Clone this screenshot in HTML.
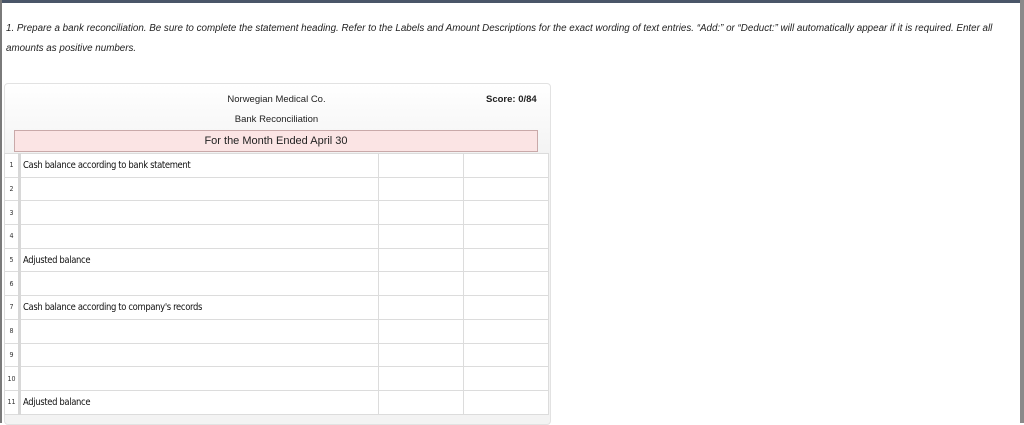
<!DOCTYPE html>
<html><head><style>
body{margin:0;width:1024px;height:423px;overflow:hidden;background:#fff;position:relative;font-family:"Liberation Sans",sans-serif}
.top{position:absolute;left:0;top:0;width:1024px;height:3px;background:#4a5668}
.lb{position:absolute;left:0;top:0;width:2px;height:423px;background:#7a7a7a}
.rb{position:absolute;left:1020px;top:0;width:4px;height:423px;background:#8a8a8a}
.q{position:absolute;left:6px;top:19px;font-size:9.8px;font-style:italic;color:#222;line-height:20px;width:1000px}
.panel{position:absolute;left:4px;top:83px;width:545px;height:340px;border:1px solid #e2e2e2;border-radius:4px;background:linear-gradient(#fff,#f3f3f3 70px)}
.t{position:absolute;font-size:9.5px;color:#222;text-align:center;left:4px;width:545px}
.score{position:absolute;left:486px;top:94px;font-size:9.5px;font-weight:bold;color:#222}
.pink{position:absolute;left:14px;top:130px;width:522px;height:20px;background:#fbe4e4;border:1px solid #c9a9a9;font-size:11px;text-align:center;line-height:20px;color:#222}
table{position:absolute;left:4px;top:153px;border-collapse:collapse;background:#fff}
td{border:1px solid #dcdcdc;height:22.7px;padding:0;font-size:9.4px;font-family:"DejaVu Sans Condensed","Liberation Sans Narrow",sans-serif;color:#111}
td.n{width:13px;font-size:7px;text-align:center;color:#333;border-right:3px solid #d8d8d8}
td.l{width:355px;padding-left:2px;letter-spacing:-0.35px}
td.c{width:84px}
</style></head><body>
<div class="top"></div><div class="lb"></div><div class="rb"></div>
<div class="q">1. Prepare a bank reconciliation. Be sure to complete the statement heading. Refer to the Labels and Amount Descriptions for the exact wording of text entries. “Add:” or “Deduct:” will automatically appear if it is required. Enter all amounts as positive numbers.</div>
<div class="panel"></div>
<div class="t" style="top:94px">Norwegian Medical Co.</div>
<div class="t" style="top:114px">Bank Reconciliation</div>
<div class="score">Score: 0/84</div>
<div class="pink">For the Month Ended April 30</div>
<table>
<tr><td class="n">1</td><td class="l">Cash balance according to bank statement</td><td class="c"></td><td class="c"></td></tr>
<tr><td class="n">2</td><td class="l"></td><td class="c"></td><td class="c"></td></tr>
<tr><td class="n">3</td><td class="l"></td><td class="c"></td><td class="c"></td></tr>
<tr><td class="n">4</td><td class="l"></td><td class="c"></td><td class="c"></td></tr>
<tr><td class="n">5</td><td class="l">Adjusted balance</td><td class="c"></td><td class="c"></td></tr>
<tr><td class="n">6</td><td class="l"></td><td class="c"></td><td class="c"></td></tr>
<tr><td class="n">7</td><td class="l">Cash balance according to company's records</td><td class="c"></td><td class="c"></td></tr>
<tr><td class="n">8</td><td class="l"></td><td class="c"></td><td class="c"></td></tr>
<tr><td class="n">9</td><td class="l"></td><td class="c"></td><td class="c"></td></tr>
<tr><td class="n">10</td><td class="l"></td><td class="c"></td><td class="c"></td></tr>
<tr><td class="n">11</td><td class="l">Adjusted balance</td><td class="c"></td><td class="c"></td></tr>
</table>
</body></html>
